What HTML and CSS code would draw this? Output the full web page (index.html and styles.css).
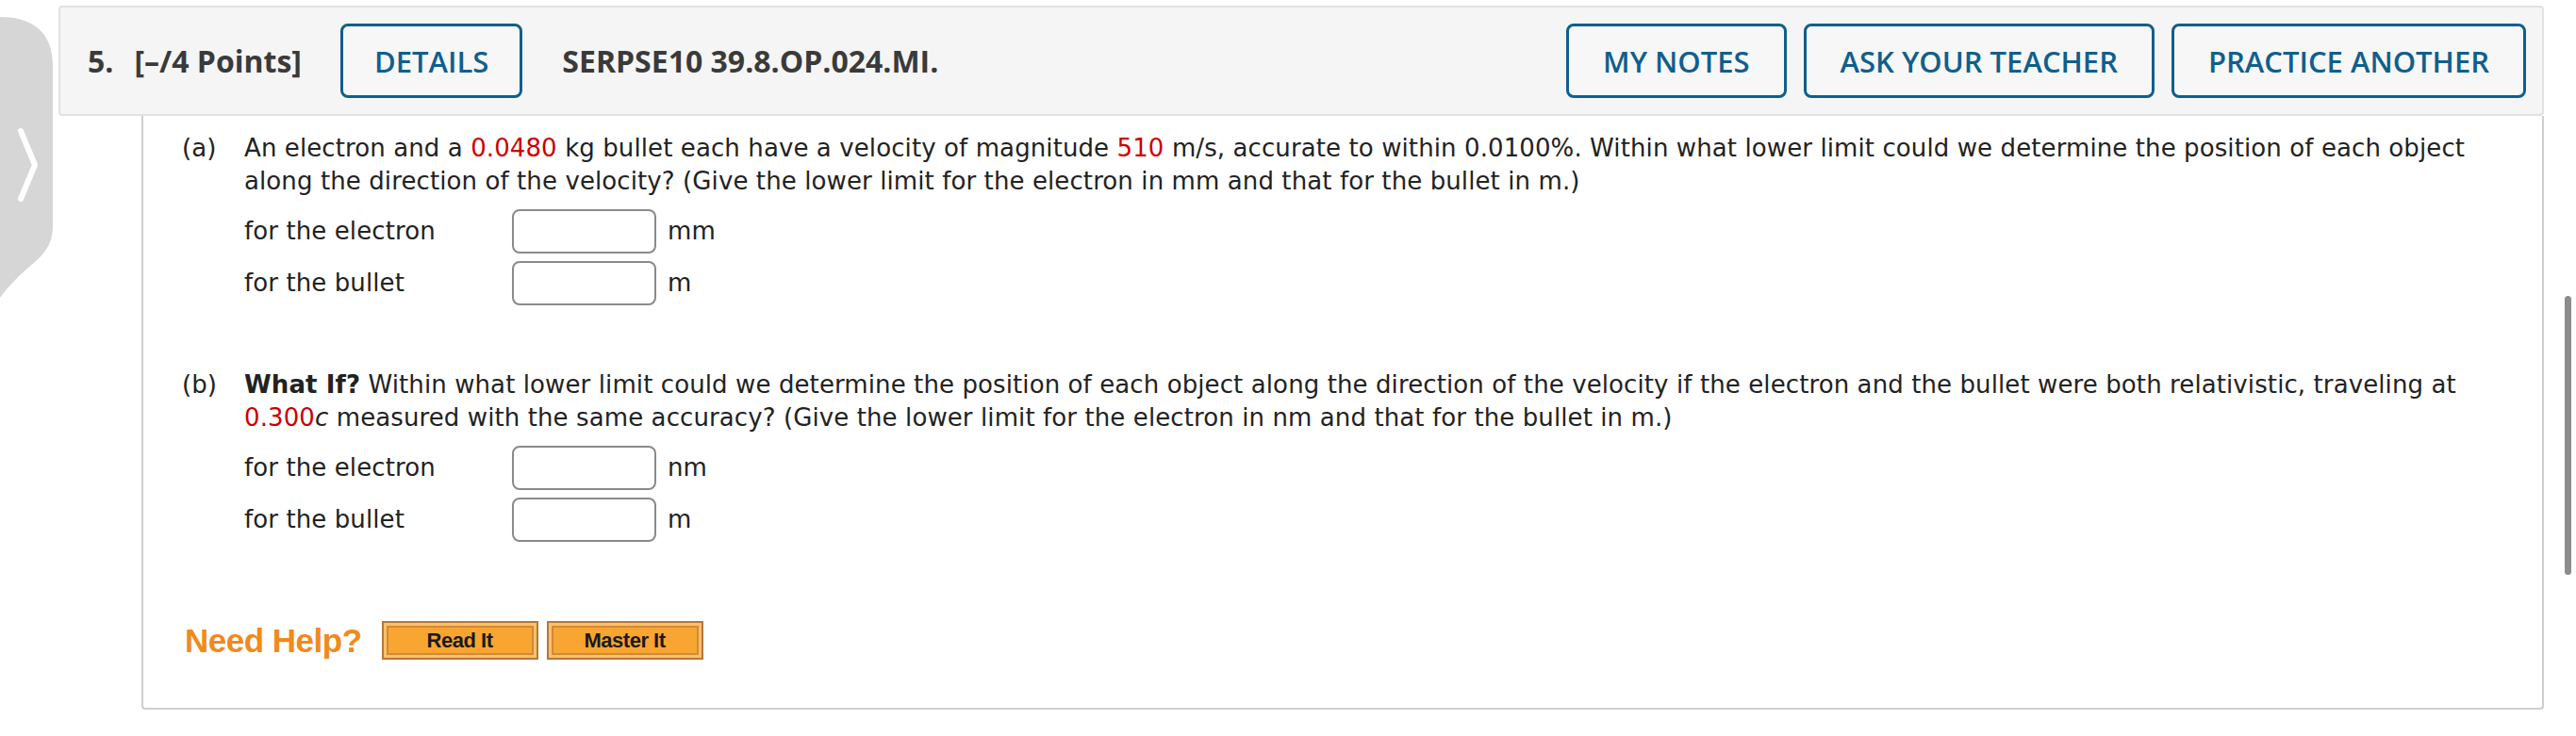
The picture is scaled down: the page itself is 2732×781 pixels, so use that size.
FILE: index.html
```html
<!DOCTYPE html>
<html lang="en">
<head>
    <link rel="stylesheet" href="styles.css">
</head>
<body>
    <div class="drawer-tab">
        <svg width="60" height="320" viewBox="0 0 60 320">
            <path d="M0 18 C30 18 56 30 56 70 L56 240 C56 262 44 272 30 284 C14 298 6 308 0 316 Z" fill="#d6d6d6"/>
            <path d="M22 139 L37 175 L22 211" fill="none" stroke="#fff" stroke-width="6" stroke-linecap="round" stroke-linejoin="round"/>
        </svg>
    </div>
    <div class="scrollbar"></div>

    <div class="question">
        <div class="question-header">
            <span class="qnum">5.</span>
            <span class="points">[&ndash;/4 Points]</span>
            <button class="outline-btn details">DETAILS</button>
            <span class="qcode">SERPSE10 39.8.OP.024.MI.</span>
            <div class="header-actions">
                <button class="outline-btn">MY NOTES</button>
                <button class="outline-btn">ASK YOUR TEACHER</button>
                <button class="outline-btn">PRACTICE ANOTHER</button>
            </div>
        </div>

        <div class="question-body">
            <div class="part part-a">
                <div class="part-label">(a)</div>
                <div class="part-content">
                    <p class="prompt">An electron and a <span class="red">0.0480</span> kg bullet each have a velocity of magnitude <span class="red">510</span> m/s, accurate to within 0.0100%. Within what lower limit could we determine the position of each object along the direction of the velocity? (Give the lower limit for the electron in mm and that for the bullet in m.)</p>
                    <div class="answer-row">
                        <span class="answer-label">for the electron</span>
                        <input class="answer-box" type="text">
                        <span class="unit">mm</span>
                    </div>
                    <div class="answer-row">
                        <span class="answer-label">for the bullet</span>
                        <input class="answer-box" type="text">
                        <span class="unit">m</span>
                    </div>
                </div>
            </div>

            <div class="part part-b">
                <div class="part-label">(b)</div>
                <div class="part-content">
                    <p class="prompt"><b>What If?</b> Within what lower limit could we determine the position of each object along the direction of the velocity if the electron and the bullet were both relativistic, traveling at <span class="red">0.300</span><i>c</i> measured with the same accuracy? (Give the lower limit for the electron in nm and that for the bullet in m.)</p>
                    <div class="answer-row">
                        <span class="answer-label">for the electron</span>
                        <input class="answer-box" type="text">
                        <span class="unit">nm</span>
                    </div>
                    <div class="answer-row">
                        <span class="answer-label">for the bullet</span>
                        <input class="answer-box" type="text">
                        <span class="unit">m</span>
                    </div>
                </div>
            </div>

            <div class="help">
                <span class="help-title">Need Help?</span>
                <button class="help-btn">Read It</button>
                <button class="help-btn">Master It</button>
            </div>
        </div>
    </div>
</body>
</html>
```

FILE: styles.css
```css
html, body {
    margin: 0;
    padding: 0;
    background: #fff;
}

body {
    position: relative;
    width: 2732px;
    height: 781px;
    overflow: hidden;
    font-family: "DejaVu Sans", Verdana, sans-serif;
    color: #222;
}

.drawer-tab {
    position: absolute;
    left: 0;
    top: 0;
}

.drawer-tab svg {
    display: block;
}

.scrollbar {
    position: absolute;
    left: 2720px;
    top: 314px;
    width: 7px;
    height: 296px;
    border-radius: 4px;
    background: #8c8c8c;
}

.question {
    padding: 6px 34px 0 62px;
}

.question-header {
    display: flex;
    align-items: center;
    height: 117px;
    box-sizing: border-box;
    padding: 0 17px 0 29px;
    background: #f5f5f5;
    border: 2px solid #e2e2e2;
    border-radius: 4px;
    font-family: "Open Sans", sans-serif;
    color: #3a3a3a;
}

.qnum,
.points,
.qcode {
    font-size: 32px;
    font-weight: 700;
}

.qnum {
    margin-right: 22px;
}

.outline-btn {
    height: 79px;
    box-sizing: border-box;
    padding: 0 36px;
    border: 3px solid #0f5f8d;
    border-radius: 8px;
    background: #f7f7f7;
    color: #0f5f8d;
    font-family: "Open Sans", sans-serif;
    font-size: 31px;
    font-weight: 600;
    white-space: nowrap;
}

.details {
    margin: 0 42px 0 41px;
    padding: 0 33px;
}

.header-actions {
    display: flex;
    gap: 18px;
    margin-left: auto;
}

.question-body {
    height: 630px;
    box-sizing: border-box;
    margin-left: 88px;
    padding: 17px 40px 0 41px;
    border: 2px solid #cfcfcf;
    border-top: none;
    border-radius: 0 0 4px 4px;
    font-size: 26px;
    line-height: 35px;
    letter-spacing: 0.1px;
}

.part {
    display: flex;
}

.part-b {
    margin-top: 59px;
}

.part-label {
    width: 66px;
    flex: none;
}

.prompt {
    margin: 0 0 12px;
}

.red {
    color: #cc0000;
}

.answer-row {
    display: flex;
    align-items: center;
    height: 47px;
    margin-bottom: 8px;
}

.answer-label {
    width: 284px;
    flex: none;
}

.answer-box {
    width: 153px;
    height: 47px;
    box-sizing: border-box;
    margin: 0 12px 0 0;
    border: 2px solid #8a8a8a;
    border-radius: 8px;
    background: #fff;
}

.help {
    display: flex;
    align-items: center;
    gap: 9px;
    margin-top: 76px;
    padding-left: 3px;
}

.help-title {
    margin-right: 12px;
    font-family: "Liberation Sans", Arial, sans-serif;
    font-size: 35px;
    font-weight: 700;
    color: #f08a1c;
    letter-spacing: -0.5px;
}

.help-btn {
    width: 166px;
    height: 41px;
    box-sizing: border-box;
    padding: 0;
    border: 2px solid #b5773a;
    background: #f9a532;
    box-shadow: inset 0 0 0 3px #fcc06a, inset 0 0 0 5px #d08a3a;
    font-family: "Liberation Sans", Arial, sans-serif;
    font-size: 22px;
    font-weight: 700;
    letter-spacing: -0.5px;
    color: #1a1a1a;
}
```
